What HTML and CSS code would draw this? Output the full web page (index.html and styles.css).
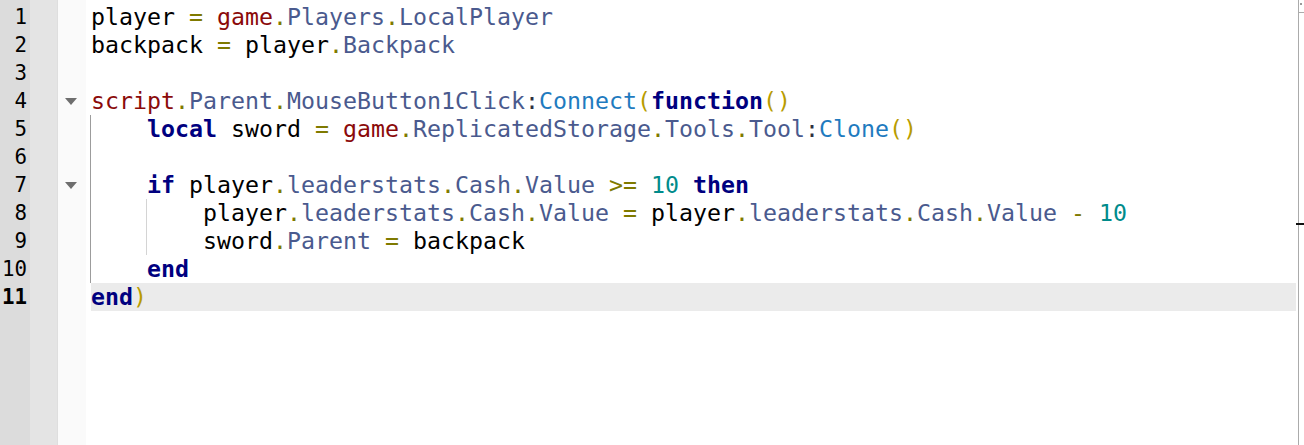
FILE: index.html
```html
<!DOCTYPE html>
<html>
<head>
<meta charset="utf-8">
<link rel="stylesheet" href="styles.css">
</head>
<body>
<div class="editor">
  <div class="numbers">
    <div class="ln">1</div><div class="ln">2</div><div class="ln">3</div><div class="ln">4</div>
    <div class="ln">5</div><div class="ln">6</div><div class="ln">7</div><div class="ln">8</div>
    <div class="ln">9</div><div class="ln">10</div><div class="ln cur">11</div>
  </div>
  <div class="marks"></div>
  <div class="folds">
    <div class="fl"></div><div class="fl"></div><div class="fl"></div>
    <div class="fl"><span class="arrow"></span></div>
    <div class="fl"></div><div class="fl"></div>
    <div class="fl"><span class="arrow"></span></div>
    <div class="fl"></div><div class="fl"></div><div class="fl"></div><div class="fl"></div>
  </div>
  <div class="code">
    <span class="guide guide-outer"></span>
    <span class="guide guide-inner"></span>
    <div class="line">player <span class="op">=</span> <span class="gl">game</span><span class="op">.</span><span class="pr">Players</span><span class="op">.</span><span class="pr">LocalPlayer</span></div>
    <div class="line">backpack <span class="op">=</span> player<span class="op">.</span><span class="pr">Backpack</span></div>
    <div class="line"></div>
    <div class="line"><span class="gl">script</span><span class="op">.</span><span class="pr">Parent</span><span class="op">.</span><span class="pr">MouseButton1Click</span><span class="co">:</span><span class="fn">Connect</span><span class="pa">(</span><span class="kw">function</span><span class="pa">()</span></div>
    <div class="line">    <span class="kw">local</span> sword <span class="op">=</span> <span class="gl">game</span><span class="op">.</span><span class="pr">ReplicatedStorage</span><span class="op">.</span><span class="pr">Tools</span><span class="op">.</span><span class="pr">Tool</span><span class="co">:</span><span class="fn">Clone</span><span class="pa">()</span></div>
    <div class="line"></div>
    <div class="line">    <span class="kw">if</span> player<span class="op">.</span><span class="pr">leaderstats</span><span class="op">.</span><span class="pr">Cash</span><span class="op">.</span><span class="pr">Value</span> <span class="op">&gt;=</span> <span class="nm">10</span> <span class="kw">then</span></div>
    <div class="line">        player<span class="op">.</span><span class="pr">leaderstats</span><span class="op">.</span><span class="pr">Cash</span><span class="op">.</span><span class="pr">Value</span> <span class="op">=</span> player<span class="op">.</span><span class="pr">leaderstats</span><span class="op">.</span><span class="pr">Cash</span><span class="op">.</span><span class="pr">Value</span> <span class="op">-</span> <span class="nm">10</span></div>
    <div class="line">        sword<span class="op">.</span><span class="pr">Parent</span> <span class="op">=</span> backpack</div>
    <div class="line">    <span class="kw">end</span></div>
    <div class="line current"><span class="kw">end</span><span class="pa">)</span></div>
  </div>
  <div class="scrollbar">
    <span class="sb-dot"></span>
    <span class="sb-cap"></span>
    <span class="sb-tick"></span>
  </div>
</div>
</body>
</html>
```

FILE: styles.css
```css
html, body {
  margin: 0;
  padding: 0;
  background: #ffffff;
}

.editor {
  display: flex;
  height: 445px;
  width: 1304px;
  overflow: hidden;
  font-family: "DejaVu Sans Mono", "Liberation Mono", monospace;
}

.numbers {
  width: 30px;
  background: #dcdcdc;
  padding-top: 3px;
  box-sizing: border-box;
}

.ln {
  height: 28px;
  line-height: 28px;
  font-size: 20.8px;
  text-align: right;
  padding-right: 3px;
  color: #000;
}

.ln.cur {
  font-weight: bold;
}

.marks {
  width: 28px;
  background: #e4e4e4;
  border-right: 1px solid #dedede;
  box-sizing: border-box;
}

.folds {
  width: 28px;
  background: #fafafa;
  padding-top: 3px;
  box-sizing: border-box;
}

.fl {
  height: 28px;
  display: flex;
  align-items: center;
  padding-left: 7px;
}

.arrow {
  width: 0;
  height: 0;
  border-left: 6px solid transparent;
  border-right: 6px solid transparent;
  border-top: 7px solid #6e6e6e;
}

.code {
  position: relative;
  flex: 1;
  padding-top: 3px;
  padding-left: 5px;
  padding-right: 2px;
}

.line {
  height: 28px;
  line-height: 28px;
  font-size: 23.25px;
  white-space: pre;
  color: #000;
}

.line.current {
  background: #ebebeb;
}

.guide {
  position: absolute;
  width: 1px;
}

.guide-outer {
  left: 4px;
  top: 115px;
  height: 168px;
  background: #9c9c9c;
}

.guide-inner {
  left: 60px;
  top: 199px;
  height: 56px;
  background: #d4d4d4;
}

.op { color: #7f7a00; }
.gl { color: #8b0a0a; }
.pr { color: #4a5a8e; }
.fn { color: #1f7bbf; }
.co { color: #303040; }
.pa { color: #b89c00; }
.nm { color: #008b8b; }
.kw { color: #00007f; font-weight: bold; }

.scrollbar {
  position: relative;
  width: 6px;
  border-left: 1px solid #ababab;
  box-sizing: border-box;
}

.sb-dot {
  position: absolute;
  left: 1px;
  top: 3px;
  width: 2px;
  height: 2px;
  background: #9a9a9a;
}

.sb-cap {
  position: absolute;
  left: 0;
  right: 0;
  top: 12px;
  height: 1px;
  background: #ababab;
}

.sb-tick {
  position: absolute;
  left: -3px;
  right: 0;
  top: 223px;
  height: 2px;
  background: #111;
}
```
